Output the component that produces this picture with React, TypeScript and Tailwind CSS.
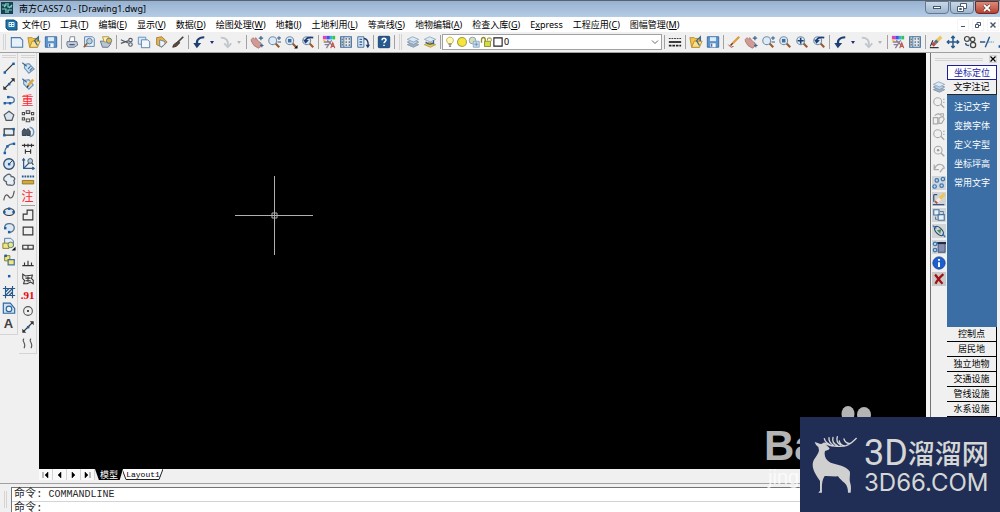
import type { ReactNode } from 'react';
import clsx from 'clsx';

const NAVY = '#1f3f73';
const STEEL = '#4b78a8';
const INK = '#333333';

const lens = (
  <>
    <path d="M9.5 9.5l4.500 4.500" stroke="#9a5a2c" strokeWidth="2.4" />
    <circle cx="6.5" cy="6.5" r="4.5" fill="#dcebf7" stroke="#7890a8" strokeWidth="1.3" />
  </>
);

const node = (x: number, y: number) => <rect x={x - 1.2} y={y - 1.2} width="2.8" height="2.8" fill="#1c5fa8" />;

const glyphs: Record<string, ReactNode> = {
  new: <path d="M1.500 3h10l3 3v8h-13z" fill="#e6f1fa" stroke={STEEL} strokeWidth="1.2" />,
  open: (
    <>
      <path d="M1 3h5l1 1h5v10H3z" fill="#f0c34a" stroke="#b5892a" />
      <path d="M3 14l3-7h9l-3 7z" fill="#fbe08a" stroke="#b5892a" />
      <path d="M8 7l5-5v5M9 7l3 5" stroke="#3f6b8c" strokeWidth="1.5" />
    </>
  ),
  save: (
    <>
      <path d="M1.500 2h13v12h-13z" fill="#5d92ca" stroke="#34679f" />
      <path d="M4.5 2.500h7v4.500h-7z" fill="#dcebf8" />
      <path d="M5 9.5h6V14H5z" fill="#f4f8fc" />
      <path d="M6.5 10v3.500" stroke="#34679f" strokeWidth="1.4" />
    </>
  ),
  print: (
    <>
      <path d="M5 7l1-5h5v5" fill="#fff" stroke="#6e7d94" />
      <path d="M2.5 7.5h11l1 4-4 2.500h-7l-1.500-3z" fill="#c2cbdb" stroke="#5d6c87" />
      <path d="M5 11h6" stroke="#47577a" strokeWidth="1.4" />
    </>
  ),
  preview: (
    <>
      <path d="M3 2h9l2 2v9H3z" fill="#e7f1fa" stroke={STEEL} />
      <path d="M6 9.500L2 14" stroke="#a4602f" strokeWidth="2" />
      <circle cx="8.500" cy="7" r="3.200" fill="#b9cfe4" stroke="#51708f" />
    </>
  ),
  publish: (
    <>
      <path d="M1.500 7h9l3 3-3 4H4z" fill="#b8c4d8" stroke="#5d6c87" />
      <path d="M4 2h7l2 6H6z" fill="#fdf4ae" stroke="#b08c2c" />
      <circle cx="11.500" cy="6.500" r="3" fill="#eab83c" stroke="#4b78a8" />
    </>
  ),
  cut: (
    <>
      <path d="M1 5.500l9 4M1 9.500l9-3" stroke="#535c66" strokeWidth="1.4" />
      <circle cx="12" cy="5.800" r="2" stroke="#535c66" strokeWidth="1.3" />
      <circle cx="12" cy="10.800" r="2" stroke="#535c66" strokeWidth="1.3" />
    </>
  ),
  copy: (
    <>
      <path d="M1.500 2.500h8.500v8H1.500z" fill="#dcebf7" stroke="#5989b8" />
      <path d="M5 5.500h7l2.500 2v7H5z" fill="#f1f7fc" stroke="#4b78a8" />
    </>
  ),
  paste: (
    <>
      <path d="M3 3l6-1 6 6-6 6-6-3z" fill="#e9b44c" stroke="#a8752a" />
      <path d="M6.500 5.500l6 2v3l-4 3-2-1z" fill="#eef5fb" stroke="#527da8" />
    </>
  ),
  brush: (
    <>
      <path d="M14 2L8 8" stroke="#444" strokeWidth="2" />
      <path d="M8.500 7L3 11l-1 3 4-1 4-4z" fill="#5b4a3b" stroke="#3b3029" />
    </>
  ),
  pencil: (
    <>
      <path d="M14 2L6.500 9.500" stroke="#e19a3c" strokeWidth="2.600" />
      <path d="M6.500 9.500L4 12" stroke="#5b3a1b" strokeWidth="1.800" />
      <path d="M1.500 11l3 3 3-1" stroke="#a33" />
    </>
  ),
  undo: (
    <>
      <path d="M6.500 12C4 7 7 2.500 14 2.500" stroke={NAVY} strokeWidth="2.400" />
      <path d="M1.500 9l4 6 5-6z" fill={NAVY} />
    </>
  ),
  redo: <path d="M2 3c6 0 9 3 8 9M6 9.500l4 4.500 4-4.500" stroke="#bfc5cb" strokeWidth="2" />,
  pan: (
    <>
      <path d="M1.500 5l2-2 2 2 1-2 3 4 3 2v4l-3 2-5-3-3-5z" fill="#cf9b94" stroke="#ad746f" />
      <path d="M12.500 1v5M10 3.500h5M13.500 10v4M11.500 12h4" stroke="#3a6591" strokeWidth="1.400" />
    </>
  ),
  zoom: (
    <>
      {lens}
      <path d="M11.500 3.500H16M13.700 1.300v4.400M12 8h4" stroke="#355f8c" strokeWidth="1.200" />
    </>
  ),
  zoomWindow: (
    <>
      {lens}
      <path d="M4.500 4.500h4v4h-4z" fill="#3f6f9f" />
      <path d="M15.500 11.500v4h-4z" fill="#111" />
    </>
  ),
  zoomBox: (
    <>
      {lens}
      <path d="M4.500 4.500h4v4h-4z" fill="#3f6f9f" />
    </>
  ),
  zoomExtents: (
    <>
      {lens}
      <path d="M6.500 3v7M3 6.500h7" stroke={NAVY} strokeWidth="1.800" />
    </>
  ),
  zoomPrev: (
    <>
      {lens}
      <path d="M5 7c1-4 4-5 9-4" stroke={NAVY} strokeWidth="2" />
      <path d="M2.500 5l2.500 5 4-4z" fill={NAVY} />
    </>
  ),
  props: (
    <>
      <path d="M1 1h4v4H1z" fill="#e33fc0" />
      <path d="M5 1h4v4H5z" fill="#4650e8" />
      <path d="M9 1h3v4H9z" fill="#27b9d8" />
      <path d="M12 1h3v4h-3z" fill="#35c24a" />
      <path d="M1 5h3v2H1z" fill="#f0d435" />
      <path d="M2 8h8M3 11h5M6 6l6 6M11 6l-6 9" stroke="#8b7b92" strokeWidth="1.500" />
      <path d="M10 15l2.300-6 2.300 6M11 13h3" stroke="#c0504d" strokeWidth="1.300" />
    </>
  ),
  center: (
    <>
      <path d="M2 2h12v12H2z" fill="#dde9f4" stroke="#3d6a98" strokeWidth="1.400" />
      <path d="M5.500 2v12" stroke="#3d6a98" />
      <path d="M7.500 4.500H9M11 4.500h1.500M7.500 8H9M11 8h1.500M7.500 11.500H9M11 11.500h1.500M3 5h1.500M3 8h1.500M3 11h1.500" stroke="#777063" strokeWidth="2" />
    </>
  ),
  palette: (
    <>
      <path d="M2 2h7v12H2z" fill="#d9e7f4" stroke="#3d6a98" />
      <path d="M4 5h3M4 8h3M4 11h3" stroke="#3d6a98" strokeWidth="1.600" />
      <path d="M9 4c4 0 5 3 5 8" stroke={NAVY} strokeWidth="1.600" />
      <path d="M11 11h5l-2.500 4z" fill={NAVY} />
    </>
  ),
  help: (
    <>
      <rect x="1.500" y="1.500" width="13" height="13" rx="1" fill="#25598f" stroke="#173e6b" />
      <path d="M5.800 6c0-3 4.600-2.800 4.500-.2C10.200 7.500 8 7.600 8 9.500M8 11v1.600" stroke="#fff" strokeWidth="1.800" />
    </>
  ),
  layers: (
    <>
      <path d="M1.500 11l6-3 7 3-6 3z" fill="#9eb0c4" stroke="#8397ad" />
      <path d="M1.500 8l6-3 7 3-6 3z" fill="#bfd2e6" stroke="#8397ad" />
      <path d="M1.500 5l6-3 7 3-6 3z" fill="#dbe9f5" stroke="#8fa5bd" />
    </>
  ),
  layersPrev: (
    <>
      <path d="M1.500 11l6-3 7 3-6 3z" fill="#e8c64c" stroke="#b99b3c" />
      <path d="M1.500 5l6-3 7 3-6 3z" fill="#dbe9f5" stroke="#8fa5bd" />
      <path d="M3 8c3 3 6 3 9 1M12 6v4H8" stroke="#34618f" strokeWidth="1.400" />
    </>
  ),
  bulb: (
    <>
      <path d="M5.500 10C1 5 5 1.500 8 1.500s7 3.500 2.500 8.500z" fill="#fdf8b2" stroke="#b49f3e" />
      <path d="M6 11h4M6.500 13.500h3" stroke="#6c6c6c" strokeWidth="1.500" />
    </>
  ),
  sun: <circle cx="8" cy="8" r="6" fill="#f6e43a" stroke="#a0a04c" strokeWidth="1.400" />,
  freeze: (
    <>
      <circle cx="6" cy="6" r="4.500" fill="#d9dfb8" stroke="#6f8fae" />
      <path d="M7 7h8v8H7z" fill="#c9dbeb" stroke="#7f9fbf" />
      <path d="M8.500 11h5M11 8.500v5" stroke="#5f86ad" />
    </>
  ),
  unlock: (
    <>
      <path d="M2 9V5c0-4 5-4 5 0v2" stroke="#8e8c25" strokeWidth="1.800" />
      <path d="M6 7h8v7H6z" fill="#d6dc40" stroke="#77761f" />
      <path d="M10 6V4c0-2 5-2 5 0v3" stroke="#a3a13a" strokeWidth="1.400" />
    </>
  ),
  square: <path d="M2.500 2.500h11v11h-11z" fill="#fff" stroke="#222" strokeWidth="1.500" />,
  linetype: (
    <>
      <path d="M1 4h14" stroke="#222" strokeDasharray="2 1" />
      <path d="M1 8h14" stroke="#222" strokeWidth="2" />
      <path d="M1 12h14" stroke="#222" strokeWidth="2" strokeDasharray="3 1" />
    </>
  ),
  erase: (
    <>
      <path d="M14 2L8 8" stroke="#ecc660" strokeWidth="3.800" />
      <path d="M9.500 6.500L7 9" stroke="#4f6f93" strokeWidth="3.800" />
      <path d="M7 9l-3 3" stroke="#b74a47" strokeWidth="3.800" />
      <path d="M1 14.500h10M1.500 13l3-7" stroke="#333" strokeWidth="1.300" />
    </>
  ),
  move: <path d="M8 1.500v13M1.500 8h13M6 3.500l2-2 2 2M6 12.500l2 2 2-2M3.500 6l-2 2 2 2M12.500 6l2 2-2 2" stroke="#28598c" strokeWidth="1.700" />,
  duplicate: (
    <>
      <circle cx="4.500" cy="4.500" r="2.800" stroke="#444" strokeWidth="1.400" />
      <circle cx="11" cy="5" r="2.500" stroke="#444" strokeWidth="1.400" />
      <circle cx="11.500" cy="11.500" r="3" stroke="#444" strokeWidth="1.400" />
      <path d="M3 9c0 3 2 3 4 3" stroke="#28598c" strokeWidth="1.600" />
    </>
  ),
  trim: (
    <>
      <path d="M0 8h6M11 2L6 14" stroke="#28598c" strokeWidth="1.600" />
      <path d="M9 8h7" stroke="#4f97d0" strokeWidth="1.400" strokeDasharray="2 1" />
    </>
  ),
  line: (
    <>
      <path d="M3 13L13 3" stroke={INK} strokeWidth="1.400" />
      {node(3, 13)}
      {node(13, 3)}
    </>
  ),
  ray: (
    <>
      <path d="M3 13L13 3" stroke={INK} strokeWidth="1.600" />
      <path d="M1.500 10v4.500H6zM10 1.500h4.500V6z" fill={INK} />
      {node(8, 8)}
    </>
  ),
  pline: (
    <>
      <path d="M2.500 11.500h7c6 0 6-7 0-7H7" stroke={STEEL} strokeWidth="1.600" />
      {node(3, 11.500)}
      {node(9, 11.500)}
      {node(7, 4.500)}
    </>
  ),
  polygon: <path d="M8 2.500l5.500 4.200-2.200 6.300H4.700L2.500 6.700z" fill="#d7e5f2" stroke="#555" strokeWidth="1.400" />,
  rect: (
    <>
      <path d="M2.500 4.500h11v7h-11z" fill="#e2edf7" stroke={INK} strokeWidth="1.400" />
      {node(2.500, 11.500)}
      {node(13, 4.500)}
    </>
  ),
  arc: (
    <>
      <path d="M3 14C3 8 7 3 14 3" stroke="#4e6e8f" strokeWidth="1.400" />
      {node(3, 13.500)}
      {node(6, 6)}
      {node(13.500, 3)}
    </>
  ),
  circle: (
    <>
      <circle cx="8" cy="8" r="6" fill="#d7e5f2" stroke="#2f4c6b" strokeWidth="1.500" />
      <path d="M8 8l4-4" stroke={INK} />
      {node(8, 8)}
    </>
  ),
  cloud: <path d="M4.500 3c3-3 6-1 6 1 4 0 5 3 3 4.500 2 4-1 7-4.500 5-3 1-4.500-1-4-3.500-4-1-4-5-.5-7z" fill="#e7eef6" stroke="#5d6670" strokeWidth="1.500" />,
  spline: <path d="M2 13C3.500 5 6 6 8 9s5 1 6-7" stroke="#555" strokeWidth="1.300" />,
  ellipse: (
    <>
      <ellipse cx="8" cy="8" rx="6" ry="4" fill="#dbe8f4" stroke={INK} strokeWidth="1.300" />
      {node(8, 4)}
      {node(2.500, 8)}
      {node(13, 8)}
    </>
  ),
  ellipseArc: (
    <>
      <path d="M3 7c1-6 11-5 11 1 0 3-3 5-6 5" fill="#dbe8f4" stroke="#587089" strokeWidth="1.400" />
      {node(3.500, 8)}
      {node(8, 12.500)}
    </>
  ),
  insert: (
    <>
      <path d="M3 1.500h7l3 3v6H3z" fill="#e3eef8" stroke="#45719d" />
      <path d="M1 7h7v6H1z" fill="#f1e678" stroke="#7c7732" />
      <circle cx="10" cy="9" r="3.200" fill="#f1e678" stroke="#45719d" />
      <path d="M15.500 11v4.500H11z" fill="#111" />
    </>
  ),
  block: (
    <>
      <path d="M3 3h6v6H3z" fill="#f1e678" stroke="#7c7732" />
      <path d="M7 7.500h7v6H7z" fill="#f1e678" stroke="#45719d" strokeWidth="1.400" />
      {node(4, 3)}
    </>
  ),
  point: node(8, 8),
  hatch: (
    <path d="M4 1v14M12 1v14M1 4h14M1 12h14M4 8l4-4M4 12l8-8M8 12l4-4" stroke="#28598c" strokeWidth="1.300" />
  ),
  region: (
    <>
      <path d="M1.500 2.500h8l5 6V14h-13z" fill="#cfe1f1" stroke="#2b679f" strokeWidth="1.300" />
      <circle cx="8" cy="9" r="3.200" fill="#f0f0f0" stroke="#2b679f" strokeWidth="1.300" />
    </>
  ),
  tag: (
    <>
      <path d="M4 4l5-1 6 6-6 5-5-6z" fill="#cfe0ef" stroke="#6b93b8" strokeWidth="1.300" />
      <path d="M1.500 2l5 4M8 9l3-3M10 11l3-3" stroke="#386893" strokeWidth="1.200" />
    </>
  ),
  tagEdit: (
    <>
      <path d="M3 4l6-1 5 6-5 5-6-6z" fill="#cfe0ef" stroke="#6b93b8" strokeWidth="1.300" />
      <path d="M1.500 2l5 4" stroke="#386893" strokeWidth="1.200" />
      <path d="M14 3L8.500 9.500" stroke="#e0a53a" strokeWidth="2.800" />
      <path d="M8.500 9.500L7 12" stroke={INK} strokeWidth="1.600" />
    </>
  ),
  ring: <path d="M6 2h4v3H6zM6 11.500h4v3H6zM1.500 4H4v2.500H1.500zM12 4h2.500v2.500H12zM1.500 10H4v2.500H1.500zM12 10h2.500v2.500H12z" stroke="#4a4a4a" strokeWidth="1.200" />,
  binoculars: (
    <>
      <path d="M1.500 12V7l2-3 2.500 2 2-2 2.500 3v5H7V9.500H6V12z" fill="#4b5a6b" stroke="#2c3642" />
      <path d="M10 2.500c6 1 6 10 0 11" stroke="#7196bd" strokeWidth="1.600" />
    </>
  ),
  dimension: <path d="M1 5h14M4 3v4M8 3v4M12 3v4M5 12h6M5 9.500v5M11 9.500v5" stroke={INK} strokeWidth="1.300" />,
  axes: (
    <>
      <path d="M3 2v11h12M3 13l7-7M1.500 4L3 2l1.500 2M13 11.500l2 1.500-2 1.500" stroke="#2c5d90" strokeWidth="1.400" />
      <path d="M12 6l2 3" stroke="#3a4c60" strokeWidth="1.500" />
      <circle cx="10.500" cy="4.500" r="2.700" fill="#b9cfe4" stroke="#3a4c60" />
    </>
  ),
  ruler: (
    <>
      <path d="M1 4h14" stroke="#28598c" strokeWidth="2.200" strokeDasharray="2 1" />
      <path d="M1.500 8.500h13v4h-13z" fill="#d5a936" stroke="#8c7028" />
    </>
  ),
  lshape: <path d="M2.500 13.500V7H7V2.500h6.500v11z" stroke={INK} strokeWidth="1.300" />,
  box: <path d="M2.500 3.500h11v9h-11z" stroke={INK} strokeWidth="1.300" />,
  fence: <path d="M1.500 6h13M1.500 10.500h13M2 6v5M8 6v5M14 6v5" stroke={INK} strokeWidth="1.300" />,
  slope: <path d="M1.500 11h13M4 10.500v-3M8 10.500v-5M12 10.500v-3" stroke={INK} strokeWidth="1.300" />,
  parcel: <path d="M2 2.500l3 2 8-1-1 4 2 2v4l-3-2-4 2H3l1-4-2-2zM5 7h6M5 10h6M8 5v6" stroke={INK} strokeWidth="1.200" />,
  station: (
    <>
      <circle cx="8" cy="8" r="5" stroke="#555" strokeWidth="1.200" />
      <circle cx="8" cy="8" r="1.200" fill="#222" />
    </>
  ),
  waves: <path d="M3.500 3c-4 3 3.500 4.500 0 11M11.500 3c-4 3 3.500 4.500 0 11" stroke="#555" strokeWidth="1.200" />,
  grayZoom: (
    <>
      <circle cx="6.500" cy="6.500" r="4.500" stroke="#aaa" strokeWidth="1.200" />
      <path d="M10 9.500l4 4M13.500 3v1.500M13.500 6.500V8" stroke="#aaa" strokeWidth="1.500" />
    </>
  ),
  grayTarget: (
    <>
      <circle cx="7" cy="7" r="4.500" stroke="#aaa" strokeWidth="1.200" />
      <circle cx="7" cy="7" r="1.400" fill="#999" />
      <path d="M10 10l4 4" stroke="#aaa" strokeWidth="1.800" />
    </>
  ),
  grayCopies: <path d="M1.500 6.500h5v7h-5zM3 4l4-2 4 2M8 7l4-2 2 3-3 5H8zM9 2h4v3" stroke="#aaa" strokeWidth="1.300" />,
  grayUndo: <path d="M2.500 5v6H8M3 10c3-8 11-5 11 0M9 14l4-5" stroke="#aaa" strokeWidth="1.400" />,
  points: (
    <>
      <path d="M0 0h16v16H0z" fill="#d2d5d8" />
      <circle cx="5.500" cy="5" r="2" stroke="#3478b8" strokeWidth="1.400" />
      <circle cx="12.500" cy="3.500" r="2" stroke="#3478b8" strokeWidth="1.400" />
      <circle cx="3" cy="12" r="2" stroke="#3478b8" strokeWidth="1.400" />
      <circle cx="11" cy="11" r="2" stroke="#3478b8" strokeWidth="1.400" />
    </>
  ),
  eraseAll: (
    <>
      <path d="M0 0h16v16H0z" fill="#d2d5d8" />
      <path d="M14.500 2L9 7.500" stroke="#efc55a" strokeWidth="3.800" />
      <path d="M9 7.500l-4 4" stroke="#f3e9e0" strokeWidth="3.800" />
      <path d="M5.500 11L4 12.500" stroke="#b74a47" strokeWidth="3.800" />
      <path d="M1 14.500h13M2 3v8M2 3h4" stroke="#36557a" strokeWidth="1.400" />
    </>
  ),
  link: (
    <>
      <path d="M0 0h16v16H0z" fill="#d2d5d8" />
      <path d="M2 2h6v6H2zM7 7.500h7V14H7z" fill="#e9f1f8" stroke="#48739d" strokeWidth="1.300" />
      <path d="M9 4h4v3M4 10v3h2" stroke="#48739d" />
    </>
  ),
  orbit: (
    <>
      <path d="M0 0h16v16H0z" fill="#d2d5d8" />
      <ellipse cx="8" cy="8" rx="6.500" ry="3.500" transform="rotate(45 8 8)" stroke="#314b63" strokeWidth="1.300" />
      <path d="M5.500 7l5-1-1 5z" fill="#3f8f62" />
      <path d="M1 2l4 3M12 11l3 4" stroke="#3478b8" strokeWidth="1.600" />
    </>
  ),
  table: (
    <>
      <path d="M0 0h16v16H0z" fill="#d2d5d8" />
      <path d="M7 4h8v10H7z" fill="#8590b0" stroke="#3e4668" />
      <path d="M6 3.500h10" stroke="#22294a" strokeWidth="2.400" />
      <circle cx="3.500" cy="4.500" r="2" stroke="#3478b8" strokeWidth="1.400" />
      <circle cx="3.500" cy="11.500" r="2" stroke="#3478b8" strokeWidth="1.400" />
    </>
  ),
  info: (
    <>
      <circle cx="8" cy="8" r="7" fill="#1e5fd0" stroke="#143d8c" />
      <path d="M8 7v5.500M8 3.500v2" stroke="#fff" strokeWidth="2.200" />
    </>
  ),
  close: (
    <>
      <path d="M0 0h16v16H0z" fill="#c9c9c9" />
      <path d="M3.500 3c3 3 5 7 8.500 10.500M13 2.500C9 6 6 9 4 13.500" stroke="#a31212" strokeWidth="2.600" />
    </>
  ),
};

const charGlyphs: Record<string, { text: string; className: string }> = {
  chong: { text: '重', className: "font-['Noto_Sans_CJK_SC',sans-serif] text-[12px] text-red-500" },
  zhu: { text: '注', className: "font-['Noto_Sans_CJK_SC',sans-serif] text-[12px] text-red-500" },
  height: { text: '.91', className: "font-['Liberation_Serif',serif] text-[11px] font-bold text-red-600" },
  text: { text: 'A', className: "font-['Liberation_Sans',sans-serif] text-[13px] font-bold text-neutral-700" },
};

function Glyph({ name, className = 'h-[14px] w-[14px]' }: { name: string; className?: string }) {
  return (
    <svg viewBox="0 0 16 16" fill="none" className={clsx('shrink-0', className)} aria-hidden="true">
      {glyphs[name]}
    </svg>
  );
}

function Tool({ name }: { name: string }) {
  const char = charGlyphs[name];
  return (
    <button aria-label={name} className="flex h-4 w-[17px] shrink-0 items-center justify-center">
      {char ? <span className={clsx('leading-4', char.className)}>{char.text}</span> : <Glyph name={name} />}
    </button>
  );
}

function Separator() {
  return (
    <span className="flex w-1 shrink-0 justify-center">
      <span className="h-3.5 w-px bg-neutral-400" />
    </span>
  );
}

function Grip() {
  return (
    <span className="flex w-2 shrink-0 justify-center gap-px">
      <span className="h-4 w-px bg-neutral-300" />
      <span className="h-4 w-px bg-neutral-300" />
    </span>
  );
}

function Caret({ muted }: { muted?: boolean }) {
  return (
    <button aria-label="history" className="flex w-2.5 shrink-0 items-center justify-center">
      <svg viewBox="0 0 4 3" className="h-[3px] w-1">
        <path d="M0 0h4L2 3z" fill={muted ? '#b5b5b5' : '#1c2f7a'} />
      </svg>
    </button>
  );
}

// '|' is a separator, 'v' and 'w' are the active and muted history carets
function ToolRow({ items }: { items: string }) {
  return items.split(' ').map((item, i) => {
    if (item === '|') return <Separator key={i} />;
    if (item === 'v') return <Caret key={i} />;
    if (item === 'w') return <Caret key={i} muted />;
    return <Tool key={i} name={item} />;
  });
}

const menus: [string, string][] = [
  ['文件', 'F'],
  ['工具', 'T'],
  ['编辑', 'E'],
  ['显示', 'V'],
  ['数据', 'D'],
  ['绘图处理', 'W'],
  ['地籍', 'J'],
  ['土地利用', 'L'],
  ['等高线', 'S'],
  ['地物编辑', 'A'],
  ['检查入库', 'G'],
  ['Express', ''],
  ['工程应用', 'C'],
  ['图幅管理', 'M'],
];

function TitleBar() {
  const button =
    'flex h-[13px] w-6 items-center justify-center rounded-b-sm border border-[#65788f] bg-linear-to-b from-[#c9d8e8] to-[#9fb6cf]';
  return (
    <header className="flex h-[17px] shrink-0 items-start border-t border-[#59636e] bg-linear-to-b from-[#96b2d1] to-[#b6cce5] pr-px">
      <svg viewBox="0 0 12 12" fill="none" className="mt-px ml-px h-3 w-3 shrink-0" aria-hidden="true">
        <path d="M0 0h12v12H0z" fill="#16424c" />
        <path d="M1 3h4V1M7 1v4h4M1 7h4v4M7 11V8h4M3 5l2-2M8 6l3-3" stroke="#7fd0cc" strokeWidth="1.200" />
      </svg>
      <h1 className="ml-1.5 flex-1 text-[9px] leading-[15px] whitespace-nowrap text-black">南方CASS7.0 - [Drawing1.dwg]</h1>
      <div className="flex gap-px">
        <button aria-label="minimize" className={button}>
          <span className="h-[3px] w-2 border border-slate-600 bg-white" />
        </button>
        <button aria-label="restore" className={button}>
          <svg viewBox="0 0 10 9" className="h-[9px] w-2.5" fill="#fff" stroke="#4b5c70">
            <path d="M3.500.5h6v5h-6z" />
            <path d="M.5 3.500h6v5h-6z" />
            <path d="M2.500 5.500h2v1h-2z" />
          </svg>
        </button>
        <button
          aria-label="close window"
          className="flex h-[13px] w-6 items-center justify-center rounded-b-sm border border-[#6b2a26] bg-linear-to-b from-[#d98b7c] to-[#b93f2c]"
        >
          <svg viewBox="0 0 10 8" className="h-2 w-2.5" fill="none">
            <path d="M2 1l6 6M8 1L2 7" stroke="#5d2b2b" strokeWidth="3" />
            <path d="M2 1l6 6M8 1L2 7" stroke="#fff" strokeWidth="1.800" />
          </svg>
        </button>
      </div>
    </header>
  );
}

function MenuBar() {
  const mdi = 'flex h-3 w-3 items-center justify-center border border-neutral-100';
  return (
    <nav className="flex h-[15px] shrink-0 items-center bg-white pr-px pl-[5px]">
      <svg viewBox="0 0 13 12" className="mr-1 h-3 w-[13px] shrink-0" fill="none" aria-hidden="true">
        <path d="M1 1h8l3 2v8H3L1 9z" fill="#1a75ae" stroke="#164b72" />
        <path d="M4 3.500h5v4H4zM6.500 3.500v4M4 5.500h5" stroke="#e2f1fa" />
      </svg>
      <ul className="flex flex-1 gap-2.5">
        {menus.map(([label, key]) => (
          <li key={label}>
            <button className="block text-[9px] leading-[15px] whitespace-nowrap text-black">
              {key ? (
                <>
                  {label}(<u>{key}</u>)
                </>
              ) : (
                <>
                  E<u>x</u>press
                </>
              )}
            </button>
          </li>
        ))}
      </ul>
      <div className="flex gap-[3px] text-slate-600">
        <button aria-label="minimize drawing" className={mdi}>
          <span className="mt-1 h-px w-1 bg-slate-600" />
        </button>
        <button aria-label="restore drawing" className={mdi}>
          <svg viewBox="0 0 6 6" className="h-1.5 w-1.5" fill="none" stroke="currentColor">
            <path d="M2 2V.5h3.500v3H4M.5 2.500h3v3h-3z" />
          </svg>
        </button>
        <button aria-label="close drawing" className={mdi}>
          <svg viewBox="0 0 6 6" className="h-1.5 w-1.5" stroke="currentColor" strokeWidth="1.400">
            <path d="M.5.5l5 5M5.500.5l-5 5" />
          </svg>
        </button>
      </div>
    </nav>
  );
}

function Toolbars() {
  return (
    <div className="flex h-[21px] shrink-0 items-center overflow-hidden border-b border-neutral-400 bg-[#f0f0f0]">
      <Grip />
      <ToolRow items="new open save | print preview publish | cut copy paste brush | undo v redo w | pan zoom zoomWindow zoomPrev | props center palette | help |" />
      <Grip />
      <ToolRow items="layers layersPrev |" />
      <div className="flex h-4 w-[220px] shrink-0 items-center border border-neutral-400 bg-white pr-0.5 pl-px">
        <Glyph name="bulb" className="h-3 w-3" />
        <Glyph name="sun" className="h-3 w-3" />
        <Glyph name="freeze" className="h-3 w-3" />
        <Glyph name="unlock" className="h-3 w-3" />
        <Glyph name="square" className="h-3 w-3" />
        <select aria-label="layer" className="flex-1 appearance-none bg-transparent text-[9px] leading-3 text-black outline-none">
          <option>0</option>
        </select>
        <svg viewBox="0 0 8 5" className="h-[5px] w-2" fill="none" stroke="#666">
          <path d="M1 .5l3 3 3-3" />
        </svg>
      </div>
      <ToolRow items="| linetype | open save | pencil pan zoom zoomBox zoomExtents zoomPrev | undo v redo w | props center | erase move duplicate trim line" />
    </div>
  );
}

function ToolColumn({ items }: { items: string[] }) {
  return (
    <div className="flex w-[18px] flex-col items-center self-start border-r border-b border-neutral-300 pt-0.5 pb-0.5">
      <span className="mb-0.5 h-[3px] w-3.5 border-y border-neutral-300" />
      {items.map((name) =>
        name === '|' ? <span key={name} className="my-px h-px w-3.5 bg-neutral-400" /> : <Tool key={name} name={name} />,
      )}
    </div>
  );
}

const drawTools =
  'line ray pline polygon rect arc circle cloud spline ellipse ellipseArc insert block point hatch region text'.split(' ');
const surveyTools =
  'tag tagEdit chong ring binoculars dimension axes ruler zhu | lshape box fence slope parcel height station ray waves'.split(' ');
const viewTools =
  'layers grayZoom grayCopies grayZoom grayTarget grayUndo points eraseAll link orbit table info close'.split(' ');

function SheetTabs() {
  const arrows = ['M2 1v6M7 1L4 4l3 3z', 'M6 1L3 4l3 3z', 'M3 1l3 3-3 3z', 'M7 1v6M2 1l3 3-3 3z'];
  return (
    <div className="flex h-[11px] shrink-0 bg-[#f0f0f0]">
      {arrows.map((d) => (
        <button key={d} aria-label="scroll tabs" className="flex w-3.5 items-center justify-center border-r border-neutral-300 bg-neutral-50">
          <svg viewBox="0 0 9 8" className="h-2 w-[9px]" fill="#000" stroke="#000" strokeWidth=".5">
            <path d={d} />
          </svg>
        </button>
      ))}
      <button className="w-7 bg-black font-['Noto_Sans_CJK_SC',sans-serif] text-[9px] leading-[11px] text-white [clip-path:polygon(0_0,100%_0,88%_100%,14%_100%)]">
        模型
      </button>
      <button className="relative w-10 font-['Liberation_Mono',monospace] text-[8px] leading-[10px] text-black">
        <svg viewBox="0 0 40 11" className="absolute inset-0 h-full w-full" fill="#fff" stroke="#222">
          <path d="M-1 0l4 10.500h33L40 0" />
        </svg>
        <span className="relative">Layout1</span>
      </button>
    </div>
  );
}

function Canvas() {
  return (
    <main className="flex min-w-0 flex-1 flex-col">
      <div className="relative flex-1 overflow-hidden bg-black">
        <svg viewBox="0 0 80 80" className="absolute top-[122px] left-[195px] h-20 w-20" fill="none" stroke="#b0b0b0">
          <path d="M40.500 1v79M1 40.500h78" />
          <path d="M38 38h5v5h-5z" />
        </svg>
      </div>
      <SheetTabs />
    </main>
  );
}

const modes = ['注记文字', '变换字体', '定义字型', '坐标坪高', '常用文字'];
const categories = ['控制点', '居民地', '独立地物', '交通设施', '管线设施', '水系设施'];

function ScreenMenu() {
  return (
    <aside className="flex flex-col pt-0.5 pr-[3px] pb-[63px] text-[9px]">
      <div className="mb-0.5 flex h-2 items-center gap-1.5 pl-1">
        <span className="h-[3px] flex-1 border-y border-neutral-300" />
        <button aria-label="close panel" className="flex h-2 w-2 items-center justify-center border border-neutral-300">
          <svg viewBox="0 0 6 6" className="h-1.5 w-1.5" stroke="#000" strokeWidth="1.200">
            <path d="M.5.5l5 5M5.500.5l-5 5" />
          </svg>
        </button>
      </div>
      <div className="flex flex-1">
        <div className="flex w-4 flex-col items-center pt-3.5">
          {viewTools.map((name, i) => (
            <Tool key={i} name={name} />
          ))}
        </div>
        <div className="flex w-[50px] flex-col">
          <button className="h-[15px] border border-[#1e1e9c] bg-white leading-[13px] text-[#1e1ea8]">坐标定位</button>
          <button className="h-[15px] border-r border-b border-neutral-800 leading-[14px] text-black">文字注记</button>
          <ul className="flex-1 bg-[#3a6ea5] pt-0.5 text-center text-white">
            {modes.map((mode) => (
              <li key={mode}>
                <button className="h-[19px] leading-[19px]">{mode}</button>
              </li>
            ))}
          </ul>
          {categories.map((category) => (
            <button key={category} className="h-[15px] border-r border-b border-black leading-[14px] text-black">
              {category}
            </button>
          ))}
        </div>
      </div>
    </aside>
  );
}

function CommandLine() {
  return (
    <footer className="flex h-[29px] shrink-0 overflow-hidden border-t border-neutral-400 bg-[#f0f0f0] pt-[3px] pr-0.5 font-['Liberation_Mono','Noto_Sans_CJK_SC',monospace] text-[10px] text-neutral-800">
      <span className="mx-1 my-1 flex gap-px">
        <span className="w-px bg-neutral-300" />
        <span className="w-px bg-neutral-300" />
      </span>
      <div className="flex-1 border-t border-l border-neutral-500 bg-white">
        <p className="flex h-3.5 border-b border-neutral-300 pl-0.5 leading-[13px] whitespace-pre">
          <span className="text-[11px]">命令:</span> COMMANDLINE
        </p>
        <div className="flex pl-0.5 leading-3">
          <label htmlFor="command" className="text-[11px]">
            命令:
          </label>
          <input id="command" className="min-w-0 flex-1 bg-transparent outline-none" />
        </div>
      </div>
    </footer>
  );
}

function Watermark() {
  return (
    <div className="pointer-events-none absolute right-0 bottom-0 h-[107px] w-[232px] font-['Liberation_Sans',sans-serif]">
      <svg viewBox="0 0 32 16" className="absolute top-0 left-[73px] h-4 w-8" fill="#b4b4b4">
        <ellipse cx="7" cy="9" rx="6.500" ry="8" />
        <ellipse cx="23" cy="10" rx="7" ry="8" />
      </svg>
      <div className="flex flex-col pt-[22px]">
        <span className="-ml-1 text-[42px] leading-[38px] font-bold text-[#b4b4b4]">Bai</span>
        <span className="text-[20px] leading-6 text-white/75">jingyan</span>
      </div>
    </div>
  );
}

function Logo() {
  return (
    <div className="absolute right-0 bottom-0 flex h-[95px] w-[200px] gap-1.5 bg-[#202e55] pt-[18px] pl-3 text-[#d6d6d6]">
      <svg viewBox="186 120 138 177" className="h-[59px] w-[46px] shrink-0" fill="none" aria-hidden="true">
        <path
          d="M194 141C200 143 207 146 214 147L223 142L229 150L239 160L236 164L225 168C221 184 228 196 242 203C262 210 288 212 299 229C302 238 297 248 300 262C304 272 303 284 302 293H294C294 282 292 272 284 264C276 258 270 252 264 244C250 245 236 242 224 243C216 254 215 270 216 293H205L210 287L210 258C200 242 184 222 189 202C192 190 205 180 207 166L205 156C200 153 196 148 194 141Z"
          fill="#d0d0d0"
        />
        <path
          d="M226 145C238 153 268 157 288 152C302 148 310 138 319 130M241 150C233 146 225 140 223 131M250 151C241 145 236 137 237 128M262 152C252 147 246 138 249 127M272 150C263 145 258 137 262 125M300 146C290 145 284 140 282 132M284 153C275 151 269 145 268 138"
          stroke="#d6d6d6"
          strokeWidth="4"
          strokeLinecap="round"
        />
      </svg>
      <div className="whitespace-nowrap">
        <p className="flex items-center leading-9">
          <span className="font-['Roboto',sans-serif] text-[36px]">3D</span>
          <span className="font-['Noto_Sans_CJK_SC',sans-serif] text-[27px] font-medium">溜溜网</span>
        </p>
        <p className="font-['Inter',sans-serif] text-[24px] leading-6">3D66.COM</p>
      </div>
    </div>
  );
}

export default function App() {
  return (
    <div className="relative flex h-screen flex-col overflow-hidden bg-[#f0f0f0] font-['Noto_Sans','Noto_Sans_CJK_SC',sans-serif]">
      <TitleBar />
      <MenuBar />
      <Toolbars />
      <div className="flex min-h-0 flex-1 pb-[3px]">
        <div className="flex w-[39px] shrink-0 gap-px">
          <ToolColumn items={drawTools} />
          <ToolColumn items={surveyTools} />
        </div>
        <Canvas />
        <div className="flex shrink-0 border-l-4 border-neutral-100 bg-[#f0f0f0]">
          <span className="w-px bg-neutral-500" />
          <ScreenMenu />
        </div>
      </div>
      <CommandLine />
      <Watermark />
      <Logo />
    </div>
  );
}
